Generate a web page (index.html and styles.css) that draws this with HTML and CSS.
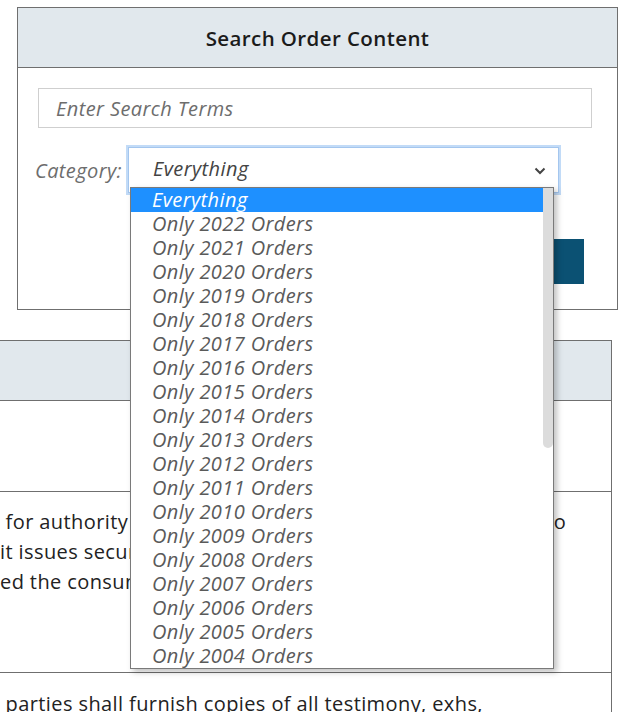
FILE: index.html
```html
<!DOCTYPE html>
<html lang="en">
  <head>
    <meta name="viewport" content="width=device-width, initial-scale=1">
    <title>Search Order Content</title>
    <link rel="stylesheet" href="styles.css">
  </head>
  <body>
  <div class="panel search-panel">
    <div class="panel-head">Search Order Content</div>
    <div class="search-body">
      <input class="terms" type="text" placeholder="Enter Search Terms">
      <div class="category-row">
        <span class="category-label">Category:</span>
        <div class="select-wrap">
          <div class="select">
            <span>Everything</span>
            <svg class="chevron" width="12" height="8" viewBox="0 0 12 8"><path d="M1.5 1.5 L6 6 L10.5 1.5" fill="none" stroke="#444" stroke-width="2"/></svg>
          </div>
          <!-- open option list of the category select -->
          <div class="options">
            <div class="option-list">
              <div class="option selected">Everything</div>
              <div class="option">Only 2022 Orders</div>
              <div class="option">Only 2021 Orders</div>
              <div class="option">Only 2020 Orders</div>
              <div class="option">Only 2019 Orders</div>
              <div class="option">Only 2018 Orders</div>
              <div class="option">Only 2017 Orders</div>
              <div class="option">Only 2016 Orders</div>
              <div class="option">Only 2015 Orders</div>
              <div class="option">Only 2014 Orders</div>
              <div class="option">Only 2013 Orders</div>
              <div class="option">Only 2012 Orders</div>
              <div class="option">Only 2011 Orders</div>
              <div class="option">Only 2010 Orders</div>
              <div class="option">Only 2009 Orders</div>
              <div class="option">Only 2008 Orders</div>
              <div class="option">Only 2007 Orders</div>
              <div class="option">Only 2006 Orders</div>
              <div class="option">Only 2005 Orders</div>
              <div class="option">Only 2004 Orders</div>
            </div>
            <div class="scrollbar"><div class="thumb"></div></div>
          </div>
        </div>
      </div>
      <div class="button-row">
        <button class="search-btn">Search</button>
      </div>
    </div>
  </div>

  <div class="panel results-panel">
    <div class="panel-head">Search Results</div>
    <div class="result-row empty"></div>
    <div class="result-row">
      <p> for authority under Section 6 of the Company Act, prior to<br>it issues securities, the Company shall file<br>ed the consummation of the transaction.</p>
    </div>
    <div class="result-row">
      <p> parties shall furnish copies of all testimony, exhs,</p>
    </div>
  </div>
  </body>
</html>
```

FILE: styles.css
```css
html, body {
  margin: 0;
  padding: 0;
  background: #fff;
  overflow: hidden;
}

body {
  font-family: "Open Sans", "Noto Sans", sans-serif;
  font-size: 20px;
  letter-spacing: 0.4px;
  color: #222;
}

.panel {
  border: 1px solid #6f6f6f;
  background: #fff;
}

.panel-head {
  height: 59px;
  background: #e1e8ed;
  border-bottom: 1px solid #6f6f6f;
  display: flex;
  align-items: center;
  justify-content: center;
  font-weight: 600;
  font-size: 20.5px;
  color: #1b1b1b;
}

.search-panel {
  margin: 7px 0 0 17px;
  width: 599px;
}

.search-body {
  padding: 20px 25px 25px 20px;
}

.terms {
  display: block;
  box-sizing: border-box;
  width: 554px;
  height: 40px;
  border: 1px solid #cfcfcf;
  padding: 0 17px;
  font-family: inherit;
  font-size: 20px;
  font-style: italic;
  letter-spacing: 0.4px;
  color: #333;
  outline: none;
}

.terms::placeholder {
  color: #6d6d6d;
}

.category-row {
  display: flex;
  align-items: center;
  margin-top: 19px;
  margin-left: -3px;
}

.category-label {
  font-style: italic;
  color: #6d6d6d;
  width: 93px;
}

.select-wrap {
  position: relative;
}

.select {
  box-sizing: border-box;
  width: 431px;
  height: 46px;
  border: 1px solid #a4c6ee;
  box-shadow: 0 0 0 2px #c2dbf7;
  padding: 0 12px 0 24px;
  display: flex;
  align-items: center;
  justify-content: space-between;
  font-style: italic;
  color: #444;
}

.select span {
  margin-top: -3px;
}

.chevron {
  margin-top: 2px;
}

.options {
  position: absolute;
  left: 2px;
  top: 40px;
  z-index: 5;
  display: flex;
  border: 1px solid #7a7a7a;
  background: #fff;
  box-shadow: 3px 3px 6px rgba(0, 0, 0, 0.25);
}

.option-list {
  width: 412px;
}

.option {
  height: 24px;
  line-height: 24px;
  padding-left: 21px;
  font-style: italic;
  color: #5a5a5a;
  white-space: nowrap;
}

.option.selected {
  background: #1e90ff;
  color: #fff;
}

.scrollbar {
  width: 10px;
  background: #fff;
}

.thumb {
  height: 260px;
  background: #dcdcdc;
  border-radius: 0 0 5px 5px;
}

.button-row {
  display: flex;
  justify-content: flex-end;
  margin-top: 46px;
  padding-right: 8px;
}

.search-btn {
  height: 45px;
  width: 130px;
  border: none;
  background: #0b5173;
  color: #fff;
  font-family: inherit;
  font-size: 20px;
}

.results-panel {
  margin-top: 30px;
  width: 611px;
  border-left: none;
}

.result-row {
  border-bottom: 1px solid #6f6f6f;
  overflow: hidden;
}

.result-row.empty {
  height: 90px;
}

.result-row p {
  margin: 0;
  padding: 15px 0 75px 0;
  line-height: 30px;
  white-space: pre;
  color: #222;
}

.result-row:last-child {
  border-bottom: none;
}

.result-row:last-child p {
  padding: 16px 0;
}
```
